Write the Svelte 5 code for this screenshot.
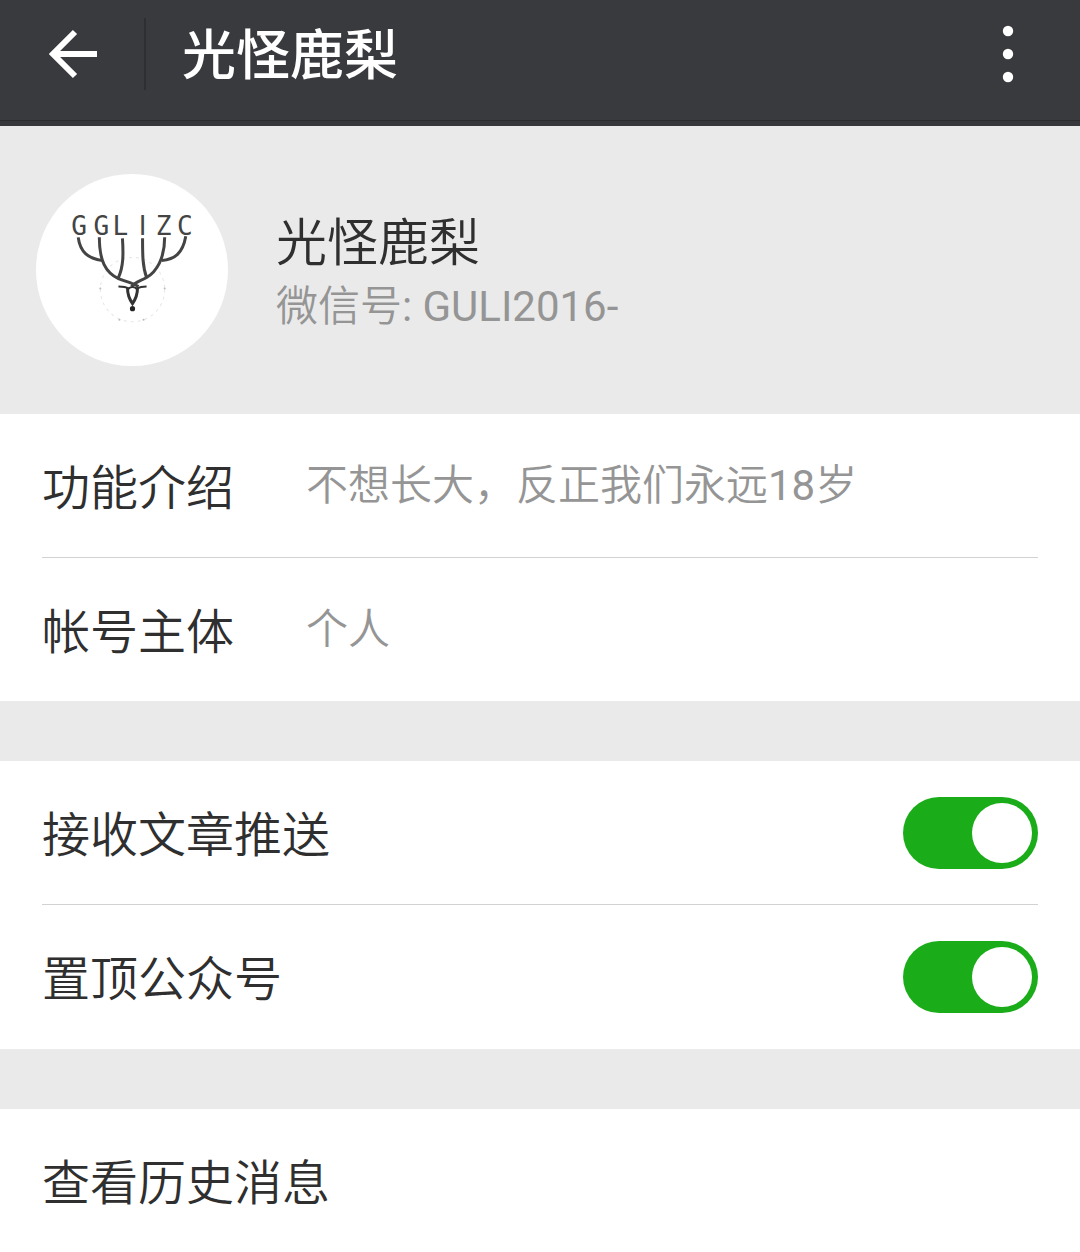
<script lang="ts">
	interface InfoRow {
		label: string;
		value: string;
	}

	interface Toggle {
		id: string;
		label: string;
		on: boolean;
	}

	const account = {
		name: '光怪鹿梨',
		wechatId: 'GULI2016-'
	};

	const info: InfoRow[] = [
		{ label: '功能介绍', value: '不想长大，反正我们永远18岁' },
		{ label: '帐号主体', value: '个人' }
	];

	let toggles: Toggle[] = $state([
		{ id: 'push', label: '接收文章推送', on: true },
		{ id: 'pin', label: '置顶公众号', on: true }
	]);

	const antlerLetters = [
		{ char: 'G', x: 43 },
		{ char: 'G', x: 65 },
		{ char: 'L', x: 84 },
		{ char: 'I', x: 106 },
		{ char: 'Z', x: 127 },
		{ char: 'C', x: 148 }
	];

	// odd entries are the latin runs
	function splitLatin(text: string): string[] {
		return text.split(/([0-9A-Za-z:-]+)/);
	}
</script>

{#snippet mixed(text: string)}
	{#each splitLatin(text) as part, i}{#if i % 2}<span class="latin">{part}</span>{:else}{part}{/if}{/each}
{/snippet}

<div class="page">
	<header class="bar">
		<div class="bar-content">
			<button class="back" type="button" aria-label="返回">
				<svg width="50" height="50" viewBox="0 0 50 50" fill="none" stroke="#fff" stroke-width="6">
					<path d="M28 3 6 25l22 22M6 25h44" />
				</svg>
			</button>
			<h1>{account.name}</h1>
			<button class="more" type="button" aria-label="更多">
				<svg width="12" height="58" viewBox="0 0 12 58" fill="#fff">
					<circle cx="6" cy="6" r="5.200" />
					<circle cx="6" cy="29" r="5.200" />
					<circle cx="6" cy="52" r="5.200" />
				</svg>
			</button>
		</div>
	</header>

	<main>
		<section class="profile">
			<svg class="avatar" viewBox="0 0 191 191" role="img" aria-label={account.name}>
				<circle cx="95.500" cy="95.500" r="95.500" fill="#fff" />
				<circle cx="96" cy="115" r="32" fill="none" stroke="#e6e6e6" stroke-dasharray="3 4" />
				<g class="letters">
					{#each antlerLetters as letter (letter.x)}
						<text class:plain={letter.char === 'I'} x={letter.x} y="61">{letter.char}</text>
					{/each}
				</g>
				<g fill="none" stroke="#444" stroke-width="3">
					<path d="M42 63C44 78 52 84 66 86" />
					<path d="M63 63C63 86 69 98 82 104C89 107 95 108 102 112" />
					<path d="M86 64C87 80 87 92 82 103" />
					<path d="M106 64C106 80 106 92 110 103" />
					<path d="M128 63C128 84 120 97 110 103C103 107 99 107 95 112" />
					<path d="M149 62C146 79 138 85 125 86" />
				</g>
				<path d="M82 112q7 0 10 2q4-3 8 0q4-2 10-2" fill="none" stroke="#333" stroke-width="2" />
				<path d="M91 113q0 9 5 16q5-7 5-16" fill="none" stroke="#333" stroke-width="3" />
				<circle cx="96" cy="134" r="2.600" fill="#222" />
				<g fill="#bbb">
					<circle cx="64" cy="114" r="1" />
					<circle cx="128" cy="114" r="1" />
					<circle cx="83" cy="145" r="1" />
					<circle cx="107" cy="145" r="1" />
				</g>
			</svg>
			<div class="identity">
				<h2>{account.name}</h2>
				<p>{@render mixed(`微信号: ${account.wechatId}`)}</p>
			</div>
		</section>

		<dl class="group">
			{#each info as item (item.label)}
				<div class="row">
					<dt>{item.label}</dt>
					<dd>{@render mixed(item.value)}</dd>
				</div>
			{/each}
		</dl>

		<div class="group toggles">
			{#each toggles as toggle (toggle.id)}
				<div class="row">
					<label for={toggle.id}>{toggle.label}</label>
					<input id={toggle.id} type="checkbox" role="switch" bind:checked={toggle.on} />
				</div>
			{/each}
		</div>

		<nav class="group">
			<a class="row" href="#history"><span>查看历史消息</span></a>
		</nav>
	</main>
</div>

<style>
	:global(body) {
		margin: 0;
		background: #eaeaea;
	}

	.page {
		font-family: Roboto, 'Noto Sans CJK SC', sans-serif;
		font-weight: 350;
		color: #2f2f2f;
	}

	h1,
	h2,
	p,
	dl,
	dd {
		margin: 0;
		font-weight: 350;
	}

	h1,
	dt,
	label,
	a span {
		padding-bottom: 4px;
		font-family: 'Noto Sans CJK SC', sans-serif;
	}

	.latin {
		font-weight: 400;
	}

	button {
		display: flex;
		align-items: center;
		justify-content: center;
		padding: 0;
		border: 0;
		background: none;
		cursor: pointer;
	}

	.bar {
		box-sizing: border-box;
		height: 126px;
		background: #393a3e;
		border-bottom: 5px solid #37383c;
	}

	.bar-content {
		box-sizing: border-box;
		display: flex;
		align-items: center;
		height: 121px;
		padding-bottom: 12px;
		border-bottom: 1px solid #2b2d2f;
	}

	.back {
		width: 146px;
		height: 72px;
		border-right: 2px solid #2e2f32;
	}

	h1 {
		flex: 1;
		padding-left: 36px;
		color: #fff;
		font-size: 54px;
		line-height: 72px;
		font-weight: 500;
	}

	.more {
		width: 144px;
		height: 72px;
	}

	.profile {
		display: flex;
		align-items: center;
		gap: 48px;
		padding: 48px 36px;
	}

	.avatar {
		flex: none;
		width: 192px;
		height: 192px;
	}

	.letters {
		fill: #444;
		font-family: 'DejaVu Sans Mono', monospace;
		font-size: 26px;
		font-weight: 400;
		text-anchor: middle;
	}

	.plain {
		font-family: 'DejaVu Sans', sans-serif;
	}

	.identity {
		padding-top: 8px;
	}

	h2 {
		font-size: 51px;
		line-height: 66px;
	}

	.identity p {
		color: #959595;
		font-size: 42px;
		line-height: 60px;
	}

	.group {
		padding: 0 42px;
		background: #fff;
	}

	.group + .group {
		margin-top: 60px;
	}

	.toggles {
		padding-bottom: 1px;
	}

	.row {
		display: flex;
		align-items: center;
		min-height: 143px;
		color: inherit;
		font-size: 48px;
		line-height: 72px;
		text-decoration: none;
	}

	.row + .row {
		border-top: 1px solid #d2d2d2;
	}

	dt {
		flex: none;
		width: 264px;
	}

	dd {
		color: #959595;
		font-size: 42px;
	}

	label {
		flex: 1;
	}

	input {
		box-sizing: border-box;
		flex: none;
		width: 135px;
		height: 72px;
		margin: 0;
		padding: 6px;
		border-radius: 36px;
		background: #ccc;
		appearance: none;
		cursor: pointer;
	}

	input::before {
		content: '';
		display: block;
		width: 60px;
		height: 60px;
		border-radius: 50%;
		background: #fff;
	}

	input:checked {
		background: #1aad19;
	}

	input:checked::before {
		margin-left: 63px;
	}
</style>
